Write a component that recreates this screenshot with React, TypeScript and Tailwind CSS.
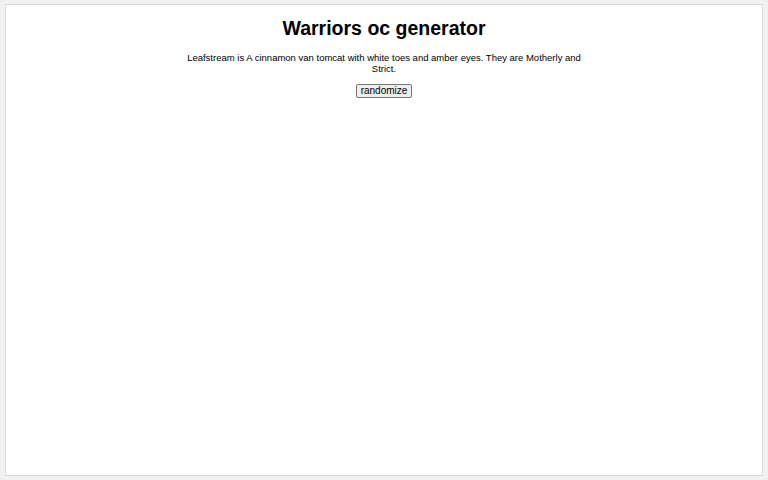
import { useState } from 'react'

const sentence =
  'Leafstream is A cinnamon van tomcat with white toes and amber eyes. They are Motherly and Strict.'

export default function App() {
  const [text] = useState(sentence)

  return (
    <div className="h-[480px] w-[768px] bg-[#f2f2f2] px-[5px] pt-[4px] pb-[4px] font-['Liberation_Sans',Arial,sans-serif]">
      <div className="flex h-full flex-col items-center border border-[#dcdcdc] bg-white pt-[11px]">
        <h1 className="text-[19.5px] leading-[24px] font-bold text-black">Warriors oc generator</h1>
        <p className="mt-[12px] w-[400px] text-center text-[9.5px] leading-[11px] text-black">{text}</p>
        <button className="mt-[10px] rounded-[2px] border border-[#767676] bg-[#efefef] px-[4px] text-[10px] leading-[12px] text-black">
          randomize
        </button>
      </div>
    </div>
  )
}
